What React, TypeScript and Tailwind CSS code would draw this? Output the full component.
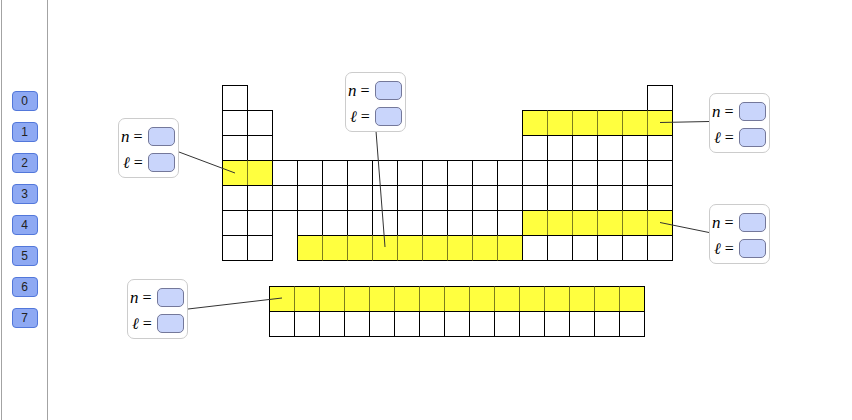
import React from "react";

// 0 = no cell, 1 = plain cell, 2 = highlighted cell
const mainRows: number[][] = [
  [1, 0, 0, 0, 0, 0, 0, 0, 0, 0, 0, 0, 0, 0, 0, 0, 0, 1],
  [1, 1, 0, 0, 0, 0, 0, 0, 0, 0, 0, 0, 2, 2, 2, 2, 2, 2],
  [1, 1, 0, 0, 0, 0, 0, 0, 0, 0, 0, 0, 1, 1, 1, 1, 1, 1],
  [2, 2, 1, 1, 1, 1, 1, 1, 1, 1, 1, 1, 1, 1, 1, 1, 1, 1],
  [1, 1, 1, 1, 1, 1, 1, 1, 1, 1, 1, 1, 1, 1, 1, 1, 1, 1],
  [1, 1, 0, 1, 1, 1, 1, 1, 1, 1, 1, 1, 2, 2, 2, 2, 2, 2],
  [1, 1, 0, 2, 2, 2, 2, 2, 2, 2, 2, 2, 1, 1, 1, 1, 1, 1],
];

const fRows: number[][] = [
  Array(15).fill(2),
  Array(15).fill(1),
];

// label boxes: page coordinates of their top-left corner
const labels = [
  { id: "s", x: 118, y: 118 },
  { id: "d", x: 345, y: 72 },
  { id: "p2", x: 709, y: 93 },
  { id: "p6", x: 709, y: 204 },
  { id: "f", x: 127, y: 279 },
];

// connector lines from box edge to the cell they point at
const connectors = [
  { x1: 179, y1: 152, x2: 235, y2: 173 },
  { x1: 376, y1: 131, x2: 385, y2: 247 },
  { x1: 709, y1: 121.5, x2: 660, y2: 122.5 },
  { x1: 709, y1: 232.5, x2: 660, y2: 222.5 },
  { x1: 188, y1: 309, x2: 282, y2: 298 },
];

function Cell({ kind, prev }: { kind: number; prev: number }) {
  if (kind === 0) return <div className="w-[25px] h-[25px] shrink-0" />;
  if (kind === 2) {
    return (
      <div
        className={
          prev === 2
            ? "w-[26px] h-[26px] -mr-px shrink-0 border border-black border-l-[#7d7d1c] bg-[#ffff3f]"
            : "w-[26px] h-[26px] -mr-px shrink-0 border border-black bg-[#ffff3f]"
        }
      />
    );
  }
  return <div className="w-[26px] h-[26px] -mr-px shrink-0 border border-black bg-white" />;
}

function Block({ rows }: { rows: number[][] }) {
  return (
    <div className="flex flex-col">
      {rows.map((row, r) => (
        <div key={r} className="flex h-[25px]">
          {row.map((k, c) => (
            <Cell key={c} kind={k} prev={c > 0 ? row[c - 1] : 0} />
          ))}
        </div>
      ))}
    </div>
  );
}

function Field() {
  return <div className="w-[27px] h-[19px] rounded-[5px] border border-[#74789a] bg-[#c9d5fb]" />;
}

function QuantumLabel({ x, y }: { x: number; y: number }) {
  return (
    <div
      className="absolute w-[61px] h-[60px] rounded-[7px] border border-[#cccccc] bg-white pt-[8px] pl-[2px] pr-[3px] flex flex-col gap-[7px] [font-family:'Liberation_Serif','DejaVu_Serif',serif]"
      style={{ left: x, top: y }}
    >
      <div className="flex items-center justify-between h-[19px] text-[16px] text-black leading-none">
        <span>
          <i className="text-[17px]">n</i> =
        </span>
        <Field />
      </div>
      <div className="flex items-center justify-between h-[19px] text-[16px] text-black leading-none">
        <span className="pl-[2px]">
          <i>ℓ</i> =
        </span>
        <Field />
      </div>
    </div>
  );
}

export default function App() {
  const buttons = ["0", "1", "2", "3", "4", "5", "6", "7"];
  return (
    <div className="relative w-[852px] h-[420px] overflow-hidden bg-white flex [font-family:'Liberation_Sans',Arial,sans-serif]">
      {/* number pad sidebar */}
      <div className="ml-px w-[47px] h-full border-x border-[#a3a3a3] flex flex-col items-center pt-[91px] gap-[11px]">
        {buttons.map((b) => (
          <button
            key={b}
            type="button"
            className="w-[26px] h-[20px] rounded-[4px] border border-[#5277da] bg-[#8ea9f3] text-[12px] text-[#222] leading-none flex items-center justify-center"
          >
            {b}
          </button>
        ))}
      </div>

      {/* periodic table */}
      <div className="flex-1 pt-[85px] pl-[174px] flex flex-col">
        <Block rows={mainRows} />
        <div className="mt-[26px] ml-[47px]">
          <Block rows={fRows} />
        </div>
      </div>

      <svg className="absolute inset-0 pointer-events-none" width="852" height="420">
        {connectors.map((l, i) => (
          <line key={i} x1={l.x1} y1={l.y1} x2={l.x2} y2={l.y2} stroke="#333" strokeWidth="1" />
        ))}
      </svg>

      {labels.map((l) => (
        <QuantumLabel key={l.id} x={l.x} y={l.y} />
      ))}
    </div>
  );
}
